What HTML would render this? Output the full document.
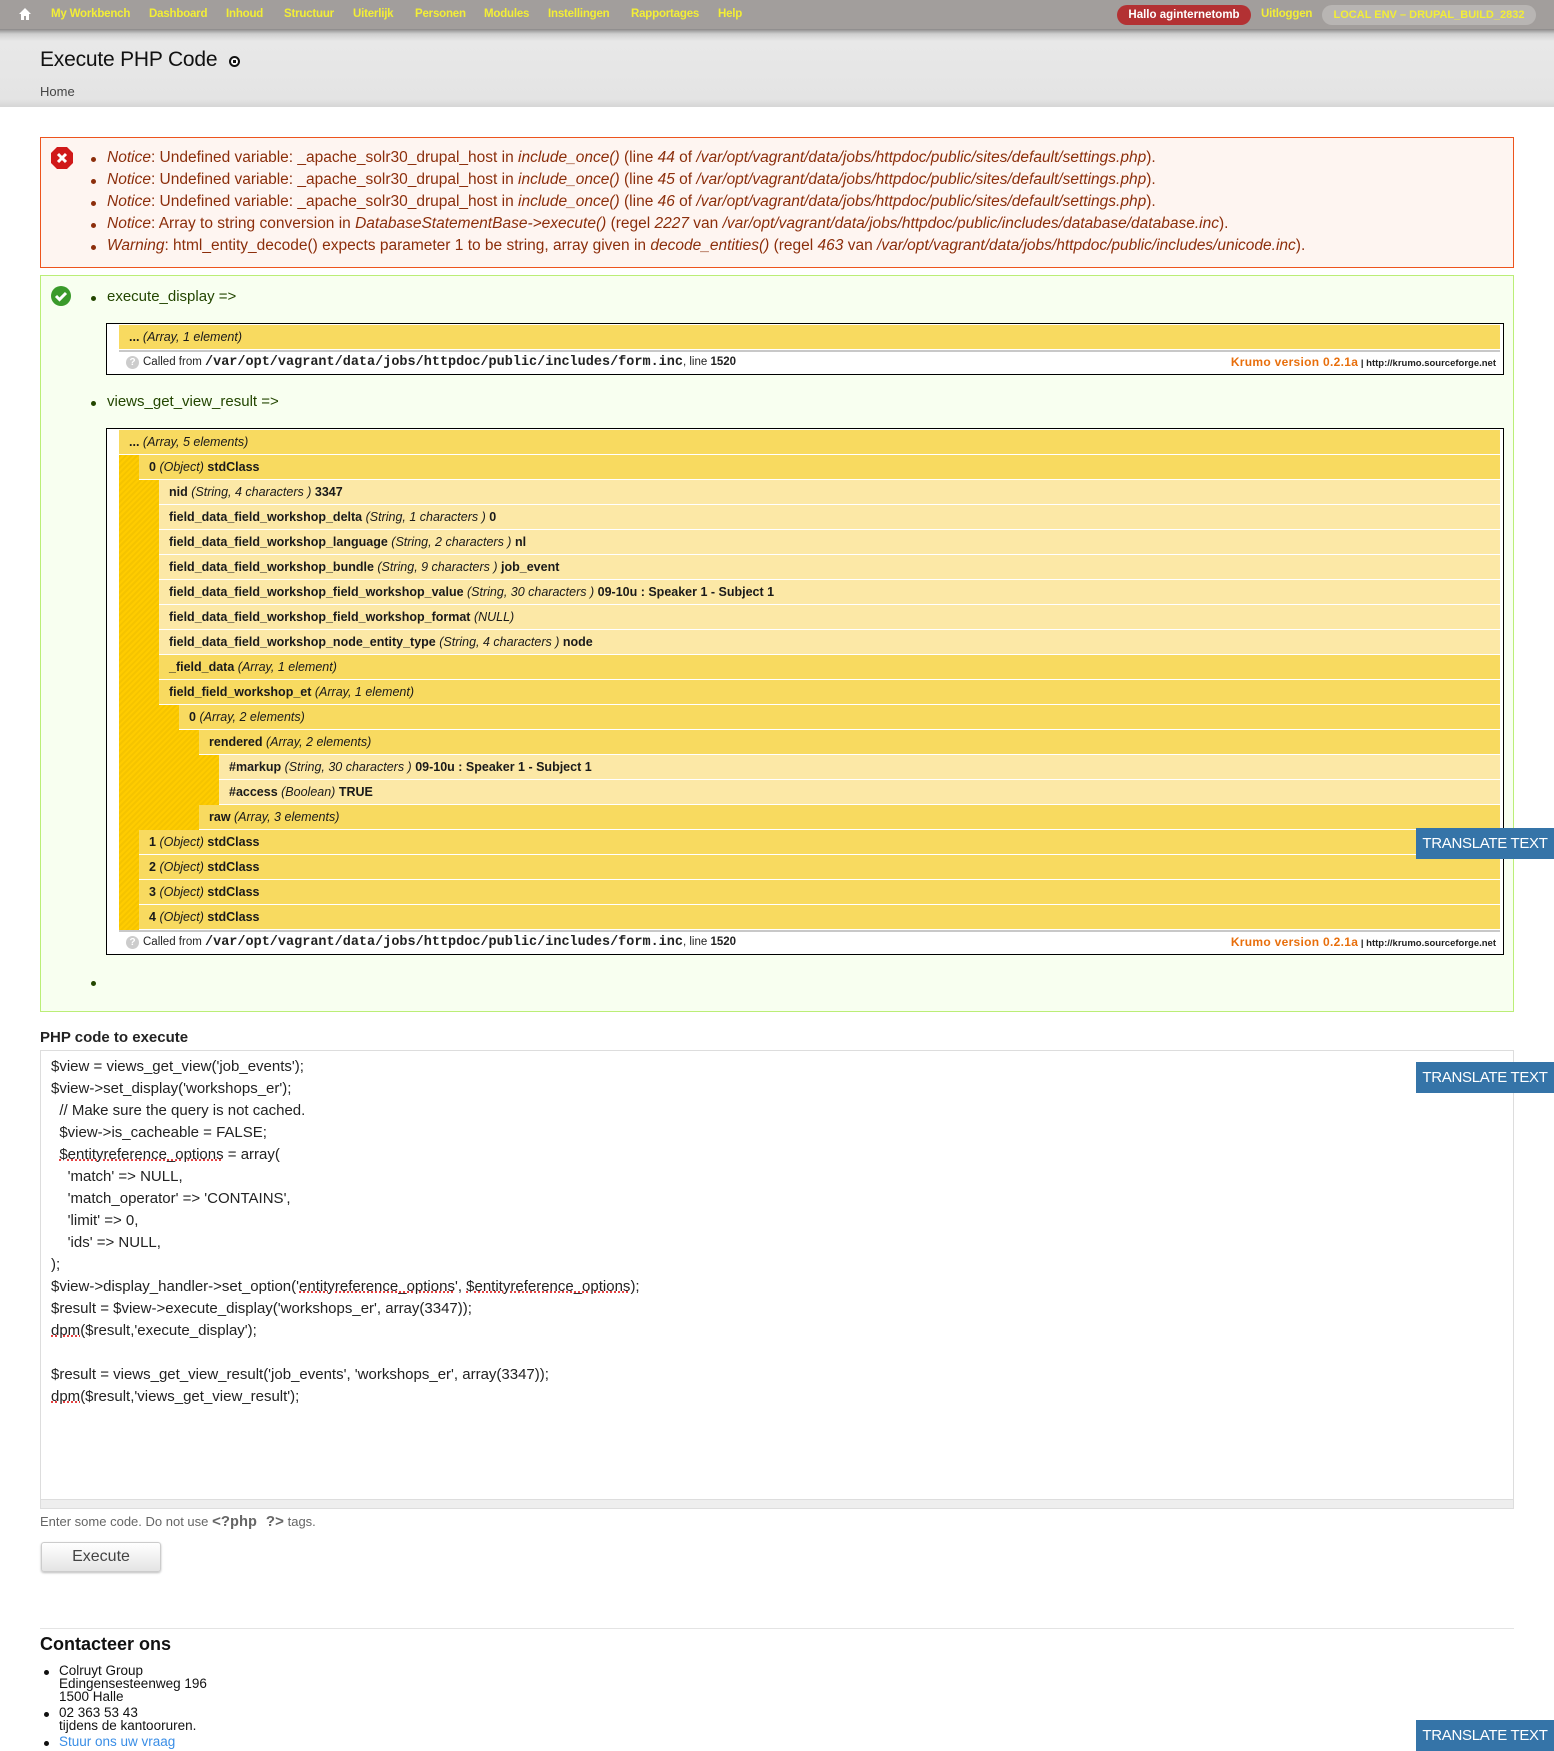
<!DOCTYPE html>
<html><head><meta charset="utf-8">
<style>
*{box-sizing:border-box;margin:0;padding:0}
body{width:1554px;height:1751px;position:relative;background:#fff;font-family:"Liberation Sans",Arial,sans-serif;overflow:hidden}
.abs{position:absolute}
#nav{left:0;top:0;width:1554px;height:29px;background:#a29e9c}
#nav span.n{position:absolute;top:8px;font-size:11.5px;font-weight:bold;color:#f3ee36;white-space:nowrap;letter-spacing:-.2px}
#hdr{left:0;top:29px;width:1554px;height:78px;background:linear-gradient(#8a8888 0,#cfcfcf 5px,#e8e8e8 12px,#e4e4e4 70px,#d6d6d6 78px)}
.err{left:40px;top:137px;width:1474px;height:131px;background:#fef5f1;border:1px solid #ed541d;color:#8c2e0b;font-size:15.5px}
.err li,.ok li{list-style:none;position:absolute;left:66px;white-space:nowrap}
.err li:before,.ok li.b:before{content:"";position:absolute;left:-16px;top:8px;width:5px;height:5px;border-radius:50%;background:currentColor}
.ok{left:40px;top:275px;width:1474px;height:737px;background:#f8fff0;border:1px solid #bbee77;color:#234600;font-size:15px}
.kb{position:absolute;left:65px;width:1398px;border:1px solid #000;background:#fff;padding:1px 1px 0 1px}
.kin{background:repeating-linear-gradient(135deg,#ffcc00 0 2px,#f5c400 2px 4px);margin-left:11px;margin-right:2px}
.r{height:25px;border-bottom:1px solid #fff;background:#f8da60;font:bold 12.5px/24px "Liberation Sans",Arial,sans-serif;color:#1a1a1a;padding-left:10px;white-space:nowrap}
.r i{font-weight:normal}
.r.l{background:#fce8a6}
.ft{height:24px;margin-left:11px;margin-right:2px;border-top:2px solid #c8c8c8;position:relative;font-size:11.5px;line-height:21px;color:#222;padding-left:24px}
.ft:before{content:"?";position:absolute;left:7px;top:4px;width:13px;height:13px;border-radius:50%;background:#ccc;color:#fff;font:bold 10px/13px "Liberation Sans",sans-serif;text-align:center}
.ft code{font:bold 13.5px "Liberation Mono",monospace}
.ft .kv{position:absolute;right:4px;top:0;font-size:9.5px;font-weight:bold}
.ft .kv b{color:#e86f0c;font-size:12px;letter-spacing:.3px}
.tb{position:absolute;left:1416px;width:138px;height:31px;background:#3574a8;color:#fff;font-size:15px;line-height:31px;text-align:center;letter-spacing:-.3px}
.code{position:absolute;left:40px;top:1050px;width:1474px;height:459px;border:1px solid #ddd;font-size:15px;color:#222}
.code div{position:absolute;left:10px;white-space:pre}
.sp{text-decoration:underline dotted #d00}
</style></head><body>
<div id="nav" class="abs">
<svg style="position:absolute;left:19px;top:8px" width="12" height="12" viewBox="0 0 12 12"><path d="M6 0L0 6h2v6h3V8h2v4h3V6h2z" fill="#fff"/></svg>
<span class="n" style="left:51px">My Workbench</span><span class="n" style="left:149px">Dashboard</span><span class="n" style="left:226px">Inhoud</span><span class="n" style="left:284px">Structuur</span><span class="n" style="left:353px">Uiterlijk</span><span class="n" style="left:415px">Personen</span><span class="n" style="left:484px">Modules</span><span class="n" style="left:548px">Instellingen</span><span class="n" style="left:631px">Rapportages</span><span class="n" style="left:718px">Help</span>
<div class="abs" style="left:1117px;top:5px;width:134px;height:20px;border-radius:10px;background:#b33133;color:#fff;font-size:11.5px;font-weight:bold;line-height:20px;text-align:center">Hallo aginternetomb</div>
<span class="n" style="left:1261px">Uitloggen</span>
<div class="abs" style="left:1322px;top:5px;width:214px;height:20px;border-radius:10px;background:#b8b5b3;color:#f3ee36;font-size:11px;font-weight:bold;line-height:20px;text-align:center">LOCAL ENV – DRUPAL_BUILD_2832</div>
</div>
<div id="hdr" class="abs">
<div class="abs" style="left:40px;top:19px;font-size:21px;color:#111;letter-spacing:-.2px">Execute PHP Code</div>
<div class="abs" style="left:229px;top:27px;width:11px;height:11px;border-radius:50%;border:2px solid #111;background:#fff"><div style="position:absolute;left:2px;top:1.5px;width:3px;height:3px;background:#111"></div></div>
<div class="abs" style="left:40px;top:55px;font-size:13px;color:#444">Home</div>
</div>

<div class="err abs">
<svg class="abs" style="left:10px;top:9px" width="22" height="22" viewBox="0 0 22 22"><polygon points="6,0 16,0 22,6 22,16 16,22 6,22 0,16 0,6" fill="#d0191a"/><path d="M7 7L15 15M15 7L7 15" stroke="#fff" stroke-width="3"/></svg>
<li style="top:11px"><i>Notice</i>: Undefined variable: _apache_solr30_drupal_host in <i>include_once()</i> (line <i>44</i> of <i>/var/opt/vagrant/data/jobs/httpdoc/public/sites/default/settings.php</i>).</li>
<li style="top:33px"><i>Notice</i>: Undefined variable: _apache_solr30_drupal_host in <i>include_once()</i> (line <i>45</i> of <i>/var/opt/vagrant/data/jobs/httpdoc/public/sites/default/settings.php</i>).</li>
<li style="top:55px"><i>Notice</i>: Undefined variable: _apache_solr30_drupal_host in <i>include_once()</i> (line <i>46</i> of <i>/var/opt/vagrant/data/jobs/httpdoc/public/sites/default/settings.php</i>).</li>
<li style="top:77px"><i>Notice</i>: Array to string conversion in <i>DatabaseStatementBase-&gt;execute()</i> (regel <i>2227</i> van <i>/var/opt/vagrant/data/jobs/httpdoc/public/includes/database/database.inc</i>).</li>
<li style="top:99px"><i>Warning</i>: html_entity_decode() expects parameter 1 to be string, array given in <i>decode_entities()</i> (regel <i>463</i> van <i>/var/opt/vagrant/data/jobs/httpdoc/public/includes/unicode.inc</i>).</li>
</div>

<div class="ok abs">
<svg class="abs" style="left:10px;top:10px" width="20" height="20" viewBox="0 0 20 20"><circle cx="10" cy="10" r="10" fill="#3a9a2a"/><path d="M5 10l3.5 3.5L15 7" stroke="#fff" stroke-width="3" fill="none"/></svg>
<li class="b" style="top:12px">execute_display =&gt;</li>
<div class="kb" style="top:47px">
<div class="kin"><div class="r">... <i>(Array, 1 element)</i></div></div>
<div class="ft">Called from <code>/var/opt/vagrant/data/jobs/httpdoc/public/includes/form.inc</code>, line <b>1520</b><span class="kv"><b>Krumo version 0.2.1a</b> | http://krumo.sourceforge.net</span></div>
</div>
<li class="b" style="top:117px">views_get_view_result =&gt;</li>
<div class="kb" style="top:152px">
<div class="kin">
<div class="r">... <i>(Array, 5 elements)</i></div>
<div class="r" style="margin-left:20px">0 <i>(Object)</i> stdClass</div>
<div class="r l" style="margin-left:40px">nid <i>(String, 4 characters )</i> 3347</div>
<div class="r l" style="margin-left:40px">field_data_field_workshop_delta <i>(String, 1 characters )</i> 0</div>
<div class="r l" style="margin-left:40px">field_data_field_workshop_language <i>(String, 2 characters )</i> nl</div>
<div class="r l" style="margin-left:40px">field_data_field_workshop_bundle <i>(String, 9 characters )</i> job_event</div>
<div class="r l" style="margin-left:40px">field_data_field_workshop_field_workshop_value <i>(String, 30 characters )</i> 09-10u : Speaker 1 - Subject 1</div>
<div class="r l" style="margin-left:40px">field_data_field_workshop_field_workshop_format <i>(NULL)</i></div>
<div class="r l" style="margin-left:40px">field_data_field_workshop_node_entity_type <i>(String, 4 characters )</i> node</div>
<div class="r" style="margin-left:40px">_field_data <i>(Array, 1 element)</i></div>
<div class="r" style="margin-left:40px">field_field_workshop_et <i>(Array, 1 element)</i></div>
<div class="r" style="margin-left:60px">0 <i>(Array, 2 elements)</i></div>
<div class="r" style="margin-left:80px">rendered <i>(Array, 2 elements)</i></div>
<div class="r l" style="margin-left:100px">#markup <i>(String, 30 characters )</i> 09-10u : Speaker 1 - Subject 1</div>
<div class="r l" style="margin-left:100px">#access <i>(Boolean)</i> TRUE</div>
<div class="r" style="margin-left:80px">raw <i>(Array, 3 elements)</i></div>
<div class="r" style="margin-left:20px">1 <i>(Object)</i> stdClass</div>
<div class="r" style="margin-left:20px">2 <i>(Object)</i> stdClass</div>
<div class="r" style="margin-left:20px">3 <i>(Object)</i> stdClass</div>
<div class="r" style="margin-left:20px">4 <i>(Object)</i> stdClass</div>
</div>
<div class="ft">Called from <code>/var/opt/vagrant/data/jobs/httpdoc/public/includes/form.inc</code>, line <b>1520</b><span class="kv"><b>Krumo version 0.2.1a</b> | http://krumo.sourceforge.net</span></div>
</div>
<li class="b" style="top:697px"></li>
</div>

<div class="abs" style="left:40px;top:1029px;font-size:15px;font-weight:bold;color:#222">PHP code to execute</div>
<div class="code">
<div style="top:7px">$view = views_get_view('job_events');</div>
<div style="top:29px">$view-&gt;set_display('workshops_er');</div>
<div style="top:51px">  // Make sure the query is not cached.</div>
<div style="top:73px">  $view-&gt;is_cacheable = FALSE;</div>
<div style="top:95px">  <span class="sp">$entityreference_options</span> = array(</div>
<div style="top:117px">    'match' =&gt; NULL,</div>
<div style="top:139px">    'match_operator' =&gt; 'CONTAINS',</div>
<div style="top:161px">    'limit' =&gt; 0,</div>
<div style="top:183px">    'ids' =&gt; NULL,</div>
<div style="top:205px">);</div>
<div style="top:227px">$view-&gt;display_handler-&gt;set_option('<span class="sp">entityreference_options</span>', <span class="sp">$entityreference_options</span>);</div>
<div style="top:249px">$result = $view-&gt;execute_display('workshops_er', array(3347));</div>
<div style="top:271px"><span class="sp">dpm</span>($result,'execute_display');</div>
<div style="top:315px">$result = views_get_view_result('job_events', 'workshops_er', array(3347));</div>
<div style="top:337px"><span class="sp">dpm</span>($result,'views_get_view_result');</div>
<div style="left:0;top:448px;width:1472px;height:9px;background:#eee;border-top:1px solid #ddd"></div>
</div>
<div class="abs" style="left:40px;top:1514px;font-size:13px;color:#666">Enter some code. Do not use <b style="font-family:'Liberation Mono',monospace;font-size:15px">&lt;?php ?&gt;</b> tags.</div>
<div class="abs" style="left:41px;top:1542px;width:120px;height:30px;border:1px solid #ccc;border-radius:3px;background:linear-gradient(#fff,#e4e4e4);font-size:16px;line-height:28px;text-align:center;color:#444;box-shadow:0 1px 2px #bbb">Execute</div>
<div class="abs" style="left:40px;top:1628px;width:1474px;height:1px;background:#e4e4e4"></div>
<div class="abs" style="left:40px;top:1634px;font-size:18px;font-weight:bold;color:#111">Contacteer ons</div>
<div class="abs" style="left:59px;top:1664px;font-size:13.5px;line-height:13px;color:#111">Colruyt Group<br>Edingensesteenweg 196<br>1500 Halle</div>
<div class="abs" style="left:59px;top:1706px;font-size:13.5px;line-height:13px;color:#111">02 363 53 43<br>tijdens de kantooruren.</div>
<div class="abs" style="left:59px;top:1735px;font-size:13.5px;line-height:13px;color:#3a8ee6">Stuur ons uw vraag</div>
<div class="abs" style="left:44px;top:1670px;width:5px;height:5px;border-radius:50%;background:#111"></div>
<div class="abs" style="left:44px;top:1712px;width:5px;height:5px;border-radius:50%;background:#111"></div>
<div class="abs" style="left:44px;top:1741px;width:5px;height:5px;border-radius:50%;background:#111"></div>

<div class="tb" style="top:828px">TRANSLATE TEXT</div>
<div class="tb" style="top:1062px">TRANSLATE TEXT</div>
<div class="tb" style="top:1720px">TRANSLATE TEXT</div>
</body></html>
